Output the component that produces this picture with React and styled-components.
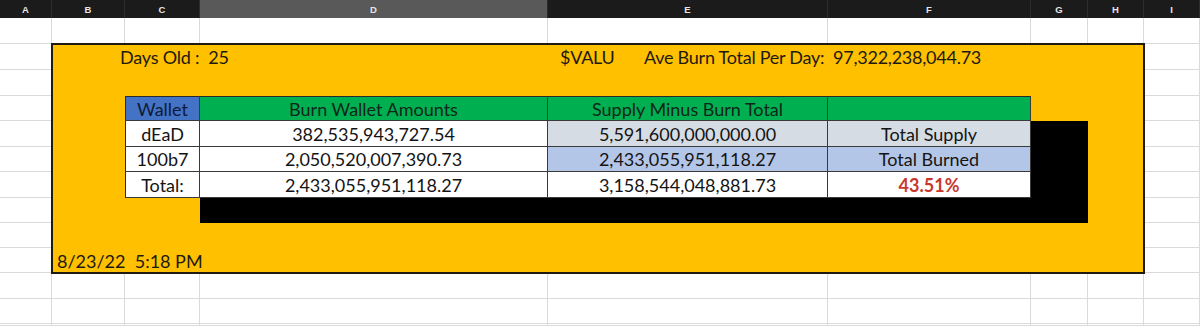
import React from "react";
import styled, { createGlobalStyle } from "styled-components";

const Global = createGlobalStyle`
  html, body { margin: 0; padding: 0; background: #fff; }
  body { width: 1200px; height: 326px; overflow: hidden; font-family: Lato, "Open Sans", sans-serif; }
`;

const COLS = [52, 73, 75, 348, 280, 203, 57, 56, 56];
const LETTERS = ["A", "B", "C", "D", "E", "F", "G", "H", "I"];
const ROWS = [26, 26, 26, 25, 26, 25, 26, 25, 25, 25, 26, 25, 2];

const Sheet = styled.div`
  display: grid;
  grid-template-columns: ${COLS.map((c) => c + "px").join(" ")};
  grid-template-rows: 18px ${ROWS.map((r) => r + "px").join(" ")};
  width: 1200px;
  height: 326px;
  overflow: hidden;
`;

const ColHead = styled.div`
  background: ${(p) => (p.$active ? "#595959" : "#1b1b1b")};
  color: #e6e6e6;
  font-family: "Liberation Sans", Arial, sans-serif;
  font-weight: 700;
  font-size: 9.5px;
  display: flex;
  align-items: center;
  justify-content: center;
  border-right: 1px solid #2c2c2c;
  box-sizing: border-box;
`;

const GridCell = styled.div`
  border-right: 1px solid #dadada;
  border-bottom: 1px solid #dadada;
  box-sizing: border-box;
  grid-column: ${(p) => p.$col};
  grid-row: ${(p) => p.$row};
`;

const Box = styled.div`
  grid-column: 2 / 9;
  grid-row: 3 / 12;
  background: #ffc000;
  outline: 2px solid #1f1a12;
  outline-offset: -1px;
  display: grid;
  grid-template-columns: 73px 75px 348px 280px 203px 57px 56px;
  grid-template-rows: 26px 26px 25px 26px 25px 26px 25px 25px 25px;
  color: #1d1a12;
  font-size: 18px;
`;

const DaysOld = styled.div`
  grid-column: 1 / 4;
  grid-row: 1;
  padding-left: 68px;
  display: flex;
  align-items: center;
  white-space: pre;
  letter-spacing: -0.2px;
`;

const TokenLine = styled.div`
  grid-column: 4 / 7;
  grid-row: 1;
  padding-left: 12px;
  display: flex;
  align-items: center;
  white-space: pre;
  letter-spacing: -0.25px;
`;

const Token = styled.span`
  width: 84px;
`;

const Stamp = styled.div`
  grid-column: 1 / 4;
  grid-row: 9;
  padding-left: 5px;
  display: flex;
  align-items: center;
  white-space: pre;
`;

const Shadow = styled.div`
  grid-column: 3 / 7;
  grid-row: 4 / 8;
  background: #000;
`;

const Cell = styled.div`
  grid-column: ${(p) => p.$col};
  grid-row: ${(p) => p.$row};
  background: ${(p) => p.$bg || "#fff"};
  color: ${(p) => p.$color || "#141414"};
  font-weight: ${(p) => (p.$bold ? 700 : 400)};
  box-sizing: border-box;
  border-right: 1px solid #3a3a3a;
  border-bottom: 1px solid #3a3a3a;
  border-left: ${(p) => (p.$first ? "1px solid #2a2a2a" : "none")};
  border-top: ${(p) => (p.$top ? "1px solid #2a2a2a" : "none")};
  display: flex;
  align-items: center;
  justify-content: center;
  white-space: nowrap;
`;

const BLUE = "#4472c4";
const GREEN = "#00b050";
const GREY = "#d6dce4";
const LBLUE = "#b4c6e7";

const rows = [
  [
    { t: "Wallet", bg: BLUE, color: "#0d1b36" },
    { t: "Burn Wallet Amounts", bg: GREEN, color: "#10261a" },
    { t: "Supply Minus Burn Total", bg: GREEN, color: "#10261a" },
    { t: "", bg: GREEN },
  ],
  [
    { t: "dEaD" },
    { t: "382,535,943,727.54" },
    { t: "5,591,600,000,000.00", bg: GREY },
    { t: "Total Supply", bg: GREY },
  ],
  [
    { t: "100b7" },
    { t: "2,050,520,007,390.73" },
    { t: "2,433,055,951,118.27", bg: LBLUE },
    { t: "Total Burned", bg: LBLUE },
  ],
  [
    { t: "Total:" },
    { t: "2,433,055,951,118.27" },
    { t: "3,158,544,048,881.73" },
    { t: "43.51%", color: "#c8372d", bold: true },
  ],
];

export default function App() {
  const grid = [];
  for (let r = 0; r < ROWS.length; r++) {
    for (let c = 0; c < COLS.length; c++) {
      grid.push(<GridCell key={`g${r}-${c}`} $col={c + 1} $row={r + 2} />);
    }
  }
  return (
    <>
      <Global />
      <Sheet>
        {LETTERS.map((l) => (
          <ColHead key={l} $active={l === "D"}>
            {l}
          </ColHead>
        ))}
        {grid}
        <Box>
          <DaysOld>{"Days Old :  25"}</DaysOld>
          <TokenLine>
            <Token>$VALU</Token>
            <span>{"Ave Burn Total Per Day:  97,322,238,044.73"}</span>
          </TokenLine>
          <Shadow />
          {rows.map((row, ri) =>
            row.map((cell, ci) => (
              <Cell
                key={`c${ri}-${ci}`}
                $col={ci + 2}
                $row={ri + 3}
                $bg={cell.bg}
                $color={cell.color}
                $bold={cell.bold}
                $first={ci === 0}
                $top={ri === 0}
              >
                {cell.t}
              </Cell>
            ))
          )}
          <Stamp>{"8/23/22  5:18 PM"}</Stamp>
        </Box>
      </Sheet>
    </>
  );
}
